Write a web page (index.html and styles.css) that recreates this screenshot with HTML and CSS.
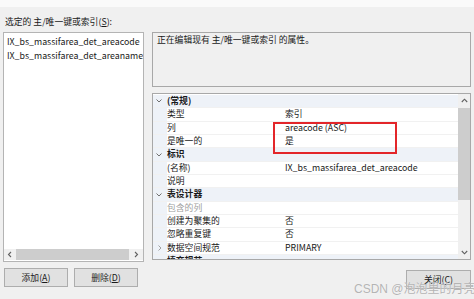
FILE: index.html
```html
<!DOCTYPE html>
<html>
<head>
<meta charset="utf-8">
<link rel="stylesheet" href="styles.css">
</head>
<body>
<div class="topbar"></div>
<div class="main">
  <div class="leftcol">
    <div class="label">选定的 主/唯一键或索引(<u>S</u>):</div>
    <div class="listbox">
      <div class="items">
        <div class="item">IX_bs_massifarea_det_areacode</div>
        <div class="item">IX_bs_massifarea_det_areaname</div>
      </div>
      <div class="hscroll">
        <span class="harrow"><svg width="6" height="7" viewBox="0 0 6 7"><polyline points="4,1 1.5,3.5 4,6" fill="none" stroke="#606060" stroke-width="1.1"/></svg></span>
        <div class="hthumb"></div>
        <span class="harrow"><svg width="6" height="7" viewBox="0 0 6 7"><polyline points="2,1 4.5,3.5 2,6" fill="none" stroke="#606060" stroke-width="1.1"/></svg></span>
      </div>
    </div>
    <div class="btnrow">
      <button class="btn">添加(<u>A</u>)</button>
      <button class="btn">删除(<u>D</u>)</button>
    </div>
  </div>
  <div class="rightcol">
    <div class="desc">正在编辑现有 主/唯一键或索引 的属性。</div>
    <div class="grid">
      <div class="props">
        <div class="row cat"><span class="exp"><svg width="6" height="4" viewBox="0 0 6 4"><polyline points="0.5,0.5 3,3 5.5,0.5" fill="none" stroke="#707070" stroke-width="1"/></svg></span><span class="name">(常规)</span><span class="val"></span></div>
        <div class="row"><span class="exp"></span><span class="name">类型</span><span class="val">索引</span></div>
        <div class="row"><span class="exp"></span><span class="name">列</span><span class="val">areacode (ASC)</span></div>
        <div class="row"><span class="exp"></span><span class="name">是唯一的</span><span class="val">是</span></div>
        <div class="row cat"><span class="exp"><svg width="6" height="4" viewBox="0 0 6 4"><polyline points="0.5,0.5 3,3 5.5,0.5" fill="none" stroke="#707070" stroke-width="1"/></svg></span><span class="name">标识</span><span class="val"></span></div>
        <div class="row"><span class="exp"></span><span class="name">(名称)</span><span class="val">IX_bs_massifarea_det_areacode</span></div>
        <div class="row"><span class="exp"></span><span class="name">说明</span><span class="val"></span></div>
        <div class="row cat"><span class="exp"><svg width="6" height="4" viewBox="0 0 6 4"><polyline points="0.5,0.5 3,3 5.5,0.5" fill="none" stroke="#707070" stroke-width="1"/></svg></span><span class="name">表设计器</span><span class="val"></span></div>
        <div class="row"><span class="exp"></span><span class="name dis">包含的列</span><span class="val"></span></div>
        <div class="row"><span class="exp"></span><span class="name">创建为聚集的</span><span class="val">否</span></div>
        <div class="row"><span class="exp"></span><span class="name">忽略重复键</span><span class="val">否</span></div>
        <div class="row"><span class="exp sub"><svg width="4" height="6" viewBox="0 0 4 6"><polyline points="0.5,0.5 3,3 0.5,5.5" fill="none" stroke="#a0a0a0" stroke-width="1"/></svg></span><span class="name">数据空间规范</span><span class="val">PRIMARY</span></div>
        <div class="row cat"><span class="exp"></span><span class="name">填充规范</span><span class="val"></span></div>
      </div>
      <div class="vscroll">
        <div class="varrow"><svg width="7" height="5" viewBox="0 0 7 5"><polyline points="0.8,4 3.5,1.2 6.2,4" fill="none" stroke="#606060" stroke-width="1.1"/></svg></div>
        <div class="vthumb"></div>
        <div class="vspace"></div>
        <div class="varrow"><svg width="7" height="5" viewBox="0 0 7 5"><polyline points="0.8,1 3.5,3.8 6.2,1" fill="none" stroke="#606060" stroke-width="1.1"/></svg></div>
      </div>
      <div class="mark"></div>
    </div>
    <div class="closerow">
      <button class="btn close">关闭(<u>C</u>)</button>
    </div>
  </div>
</div>
<div class="watermark">CSDN @泡泡里的月亮</div>
</body>
</html>
```

FILE: styles.css
```css
* { box-sizing: border-box; }
html, body {
  margin: 0;
  padding: 0;
}
body {
  width: 474px;
  height: 299px;
  overflow: hidden;
  background: #f0f0f0;
  font-family: "Noto Sans CJK SC", "Liberation Sans", sans-serif;
  font-size: 8.8px;
  color: #1a1a1a;
  position: relative;
}
u { text-decoration: underline; text-underline-offset: 1px; }
.topbar {
  height: 7px;
  background: #fafafa;
}
.main {
  display: flex;
  gap: 8px;
  padding-left: 3px;
}
.leftcol {
  width: 141px;
  display: flex;
  flex-direction: column;
}
.label {
  height: 25px;
  padding-top: 9px;
  padding-left: 2px;
  line-height: 12px;
  white-space: nowrap;
}
.listbox {
  height: 230px;
  background: #fff;
  border: 1px solid #b4b4b4;
  display: flex;
  flex-direction: column;
}
.items {
  flex: 1;
  padding-top: 2px;
  overflow: hidden;
}
.item {
  line-height: 13.5px;
  padding-left: 3px;
  white-space: nowrap;
  overflow: hidden;
}
.hscroll {
  height: 11px;
  margin-bottom: 1px;
  display: flex;
  align-items: stretch;
  background: #f0f0f0;
}
.harrow {
  width: 12px;
  display: flex;
  align-items: center;
  justify-content: center;
}
.hscroll .harrow:last-child { width: 14px; }
.hthumb {
  flex: 1;
  background: #cdcdcd;
}
.btnrow {
  margin-top: 6px;
  display: flex;
  gap: 6px;
  padding-left: 1px;
}
.btn {
  width: 64px;
  height: 19px;
  padding: 0;
  border: 1px solid #adadad;
  background: #e1e1e1;
  font-family: inherit;
  font-size: 8.8px;
  color: #1a1a1a;
  line-height: 16px;
}
.rightcol {
  width: 319px;
  padding-top: 25px;
  display: flex;
  flex-direction: column;
}
.desc {
  height: 55px;
  border: 1px solid #a8a8a8;
  padding: 1px 4px;
  line-height: 12px;
}
.grid {
  position: relative;
  margin-top: 6px;
  height: 167px;
  border: 1px solid #a8a8a8;
  background: #fff;
  display: flex;
}
.props {
  flex: 1;
  padding-top: 1px;
  overflow: hidden;
  background: #fff;
}
.row {
  display: grid;
  grid-template-columns: 14px 114px 1fr;
  height: 13.35px;
  line-height: 12.35px;
  border-bottom: 1px solid #f1f1f1;
  white-space: nowrap;
}
.exp {
  background: #eef2f8;
  display: flex;
  align-items: center;
  justify-content: center;
  padding-right: 2px;
}
.exp.sub { padding-right: 0; }
.cat { background: #eef2f8; }
.cat .name { font-weight: bold; }
.dis { color: #a0a0a0; }
.val { padding-left: 4px; overflow: hidden; }
.vscroll {
  width: 12px;
  background: #f0f0f0;
  display: flex;
  flex-direction: column;
}
.varrow {
  height: 13px;
  display: flex;
  align-items: center;
  justify-content: center;
}
.vthumb {
  margin-top: 1px;
  height: 92px;
  background: #cdcdcd;
}
.vspace { flex: 1; }
.mark {
  position: absolute;
  left: 120px;
  top: 28px;
  width: 124px;
  height: 32px;
  border: 2px solid #e3262a;
}
.closerow {
  margin-top: 10px;
  display: flex;
  justify-content: flex-end;
}
.btn.close {
  width: 65px;
}
.watermark {
  position: absolute;
  left: 354px;
  top: 279px;
  font-family: "Liberation Sans", "Noto Sans CJK SC", sans-serif;
  font-size: 12px;
  color: #b4b4b4;
  white-space: nowrap;
  text-shadow: 0 0 1px rgba(255,255,255,0.8);
}
```
